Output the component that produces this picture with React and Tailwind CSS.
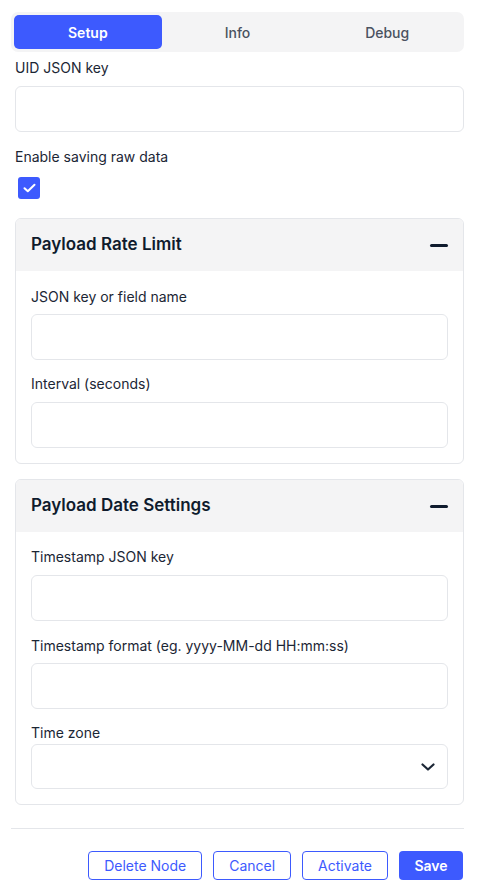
import React from "react";

function Field({ label, gap = "mb-[7px]", select = false, h = "h-[46px]" }) {
  return (
    <div>
      <div className={`text-[14px] leading-[20px] font-normal text-[#1b2635] ${gap}`}>{label}</div>
      <div className={`${h} w-full rounded-[6px] border border-[#e4e6ea] bg-white flex items-center justify-end pr-[12px]`}>
        {select && (
          <svg width="14" height="8" viewBox="0 0 14 8" fill="none">
            <path d="M1.5 1.5L7 6.5L12.5 1.5" stroke="#1b2635" strokeWidth="2.2" strokeLinecap="round" strokeLinejoin="round" />
          </svg>
        )}
      </div>
    </div>
  );
}

function Panel({ title, children }) {
  return (
    <div className="rounded-[6px] border border-[#e4e6ea] overflow-hidden">
      <div className="h-[52px] bg-[#f4f4f5] flex items-center justify-between px-[15px]">
        <span className="text-[17px] font-semibold text-[#0f1b2d]">{title}</span>
        <span className="block w-[18px] h-[3px] rounded-full bg-[#0f1b2d]" />
      </div>
      <div className="px-[15px] pt-[16px] pb-[15px]">{children}</div>
    </div>
  );
}

export default function App() {
  return (
    <div className="w-[477px] h-[889px] bg-white pl-[11px] pr-[13px] pt-[12px]" style={{ fontFamily: "Inter, 'Noto Sans', sans-serif" }}>
      <div className="h-[40px] rounded-[7px] bg-[#f4f4f5] p-[3px] grid grid-cols-3 gap-[2px]">
        <div className="rounded-[5px] bg-[#3d5afe] flex items-center justify-center text-white text-[14px] font-semibold">Setup</div>
        <div className="flex items-center justify-center text-[#4a5260] text-[14px] font-medium">Info</div>
        <div className="flex items-center justify-center text-[#4a5260] text-[14px] font-medium">Debug</div>
      </div>

      <div className="pl-[4px]">
        <div className="mt-[6px]">
          <Field label="UID JSON key" gap="mb-[8px]" />
        </div>
        <div className="mt-[15px] text-[14px] leading-[20px] font-normal text-[#1b2635]">Enable saving raw data</div>
        <div className="mt-[10px] ml-[3px] w-[22px] h-[22px] rounded-[3px] bg-[#3d5afe] flex items-center justify-center">
          <svg width="13" height="10" viewBox="0 0 13 10" fill="none">
            <path d="M1.5 5.2L4.8 8.3L11.5 1.7" stroke="white" strokeWidth="2" strokeLinecap="round" strokeLinejoin="round" />
          </svg>
        </div>

        <div className="mt-[19px]">
          <Panel title="Payload Rate Limit">
            <Field label="JSON key or field name" />
            <div className="mt-[14px]">
              <Field label="Interval (seconds)" gap="mb-[8px]" />
            </div>
          </Panel>
        </div>

        <div className="mt-[15px]">
          <Panel title="Payload Date Settings">
            <div className="-mt-[1px]">
              <Field label="Timestamp JSON key" gap="mb-[8px]" />
            </div>
            <div className="mt-[15px]">
              <Field label="Timestamp format (eg. yyyy-MM-dd HH:mm:ss)" gap="mb-[7px]" />
            </div>
            <div className="mt-[14px]">
              <Field label="Time zone" gap="mb-[1px]" select h="h-[45px]" />
            </div>
          </Panel>
        </div>
      </div>

      <div className="mt-[23px] h-px bg-[#e4e6ea]" />

      <div className="mt-[22px] flex justify-end gap-[11px]">
        <button className="h-[29px] px-[15px] rounded-[4px] border border-[#3d5afe] text-[#3d5afe] text-[14px] font-normal bg-white">Delete Node</button>
        <button className="h-[29px] px-[15px] rounded-[4px] border border-[#3d5afe] text-[#3d5afe] text-[14px] font-normal bg-white">Cancel</button>
        <button className="h-[29px] px-[15px] rounded-[4px] border border-[#3d5afe] text-[#3d5afe] text-[14px] font-normal bg-white">Activate</button>
        <button className="h-[29px] w-[64px] mr-px rounded-[4px] bg-[#3d5afe] text-white text-[14px] font-semibold">Save</button>
      </div>
    </div>
  );
}
